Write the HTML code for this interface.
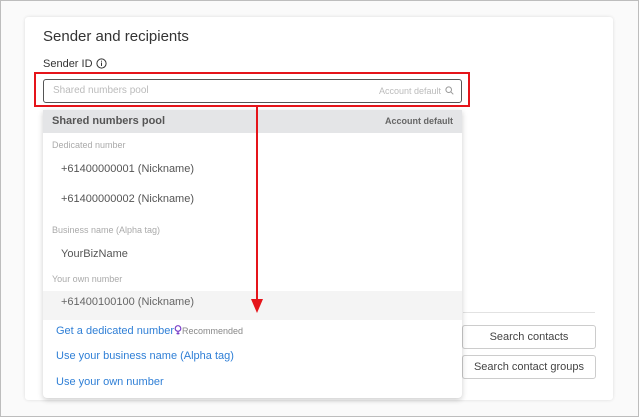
<!DOCTYPE html><html><head><style>
body{margin:0;width:639px;height:417px;position:relative;font-family:"Liberation Sans",sans-serif;background:#fafafa;overflow:hidden}
.frame{position:absolute;left:0;top:0;width:637px;height:415px;border:1px solid #bdbdbd;}
.card{position:absolute;left:25px;top:17px;width:588px;height:383px;background:#fff;box-shadow:0 0 3px rgba(0,0,0,.12);border-radius:3px}
.a{position:absolute;white-space:nowrap}
.red{position:absolute;left:34px;top:72px;width:432px;height:31px;border:2px solid #e5141a}
.inp{position:absolute;left:43px;top:79px;width:417px;height:22px;border:1px solid #555;border-radius:3px;background:#fff}
.dd{position:absolute;left:43px;top:110px;width:419px;height:288px;background:#fff;box-shadow:0 2px 6px rgba(0,0,0,.2);border-radius:0 0 4px 4px}
.lk{color:#2f7fd6;font-size:11px}
.btn{position:absolute;border:1px solid #ccc;border-radius:3px;background:#fff;font-size:11px;color:#444;text-align:center;line-height:22px}
</style></head><body>
<div class="frame"></div>
<div class="card"></div>
<div class="a" style="left:43px;top:28px;font-size:15px;color:#333">Sender and recipients</div>
<div class="a" style="left:43px;top:58px;font-size:11px;color:#333">Sender ID</div>
<svg class="a" style="left:96px;top:58px" width="11" height="11" viewBox="0 0 11 11"><circle cx="5.5" cy="5.5" r="4.6" fill="none" stroke="#333" stroke-width="1"/><rect x="5" y="4.5" width="1" height="3.5" fill="#333"/><rect x="5" y="2.7" width="1" height="1" fill="#333"/></svg>
<div style="position:absolute;left:463px;top:312px;width:132px;height:1px;background:#e2e2e2"></div>
<div class="btn" style="left:462px;top:325px;width:132px;height:22px">Search contacts</div>
<div class="btn" style="left:462px;top:355px;width:132px;height:22px">Search contact groups</div>
<div class="red"></div>
<div class="inp"><span class="a" style="left:9px;top:5px;font-size:10px;color:#bbb">Shared numbers pool</span><span class="a" style="right:20px;top:6px;font-size:9px;color:#bbb">Account default</span>
<svg class="a" style="right:7px;top:6px" width="9" height="9" viewBox="0 0 9 9"><circle cx="3.7" cy="3.7" r="2.8" fill="none" stroke="#999" stroke-width="1"/><path d="M5.8 5.8L8.3 8.3" stroke="#999" stroke-width="1"/></svg></div>
<div class="dd">
<div style="position:absolute;left:0;top:0;width:419px;height:23px;background:#e4e5e7"></div>
<div class="a" style="left:9px;top:5px;font-size:11px;font-weight:bold;color:#555">Shared numbers pool</div>
<div class="a" style="right:9px;top:6px;font-size:9px;font-weight:bold;color:#666">Account default</div>
<div class="a" style="left:9px;top:30px;font-size:9px;color:#aaa">Dedicated number</div>
<div class="a" style="left:18px;top:53px;font-size:11px;color:#555">+61400000001 (Nickname)</div>
<div class="a" style="left:18px;top:83px;font-size:11px;color:#555">+61400000002 (Nickname)</div>
<div class="a" style="left:9px;top:115px;font-size:9px;color:#aaa">Business name (Alpha tag)</div>
<div class="a" style="left:18px;top:138px;font-size:11px;color:#555">YourBizName</div>
<div class="a" style="left:9px;top:164px;font-size:9px;color:#aaa">Your own number</div>
<div style="position:absolute;left:0;top:181px;width:419px;height:29px;background:#f4f4f4"></div>
<div class="a" style="left:18px;top:186px;font-size:11px;color:#666">+61400100100 (Nickname)</div>
<div class="a lk" style="left:13px;top:215px">Get a dedicated number<svg width="8" height="10" viewBox="0 0 8 10" style="vertical-align:-1px"><circle cx="4" cy="3.5" r="2.8" fill="none" stroke="#7a3fc8" stroke-width="1.2"/><path d="M4 6.3V9.5M2.5 8.5H5.5" stroke="#7a3fc8" stroke-width="1.2"/></svg><span style="color:#888;font-size:9px">Recommended</span></div>
<div class="a lk" style="left:13px;top:240px">Use your business name (Alpha tag)</div>
<div class="a lk" style="left:13px;top:266px">Use your own number</div>
</div>
<div style="position:absolute;left:256px;top:105px;width:2px;height:196px;background:#e5141a"></div>
<div style="position:absolute;left:251px;top:299px;width:0;height:0;border-left:6px solid transparent;border-right:6px solid transparent;border-top:14px solid #e5141a"></div>
</body></html>
